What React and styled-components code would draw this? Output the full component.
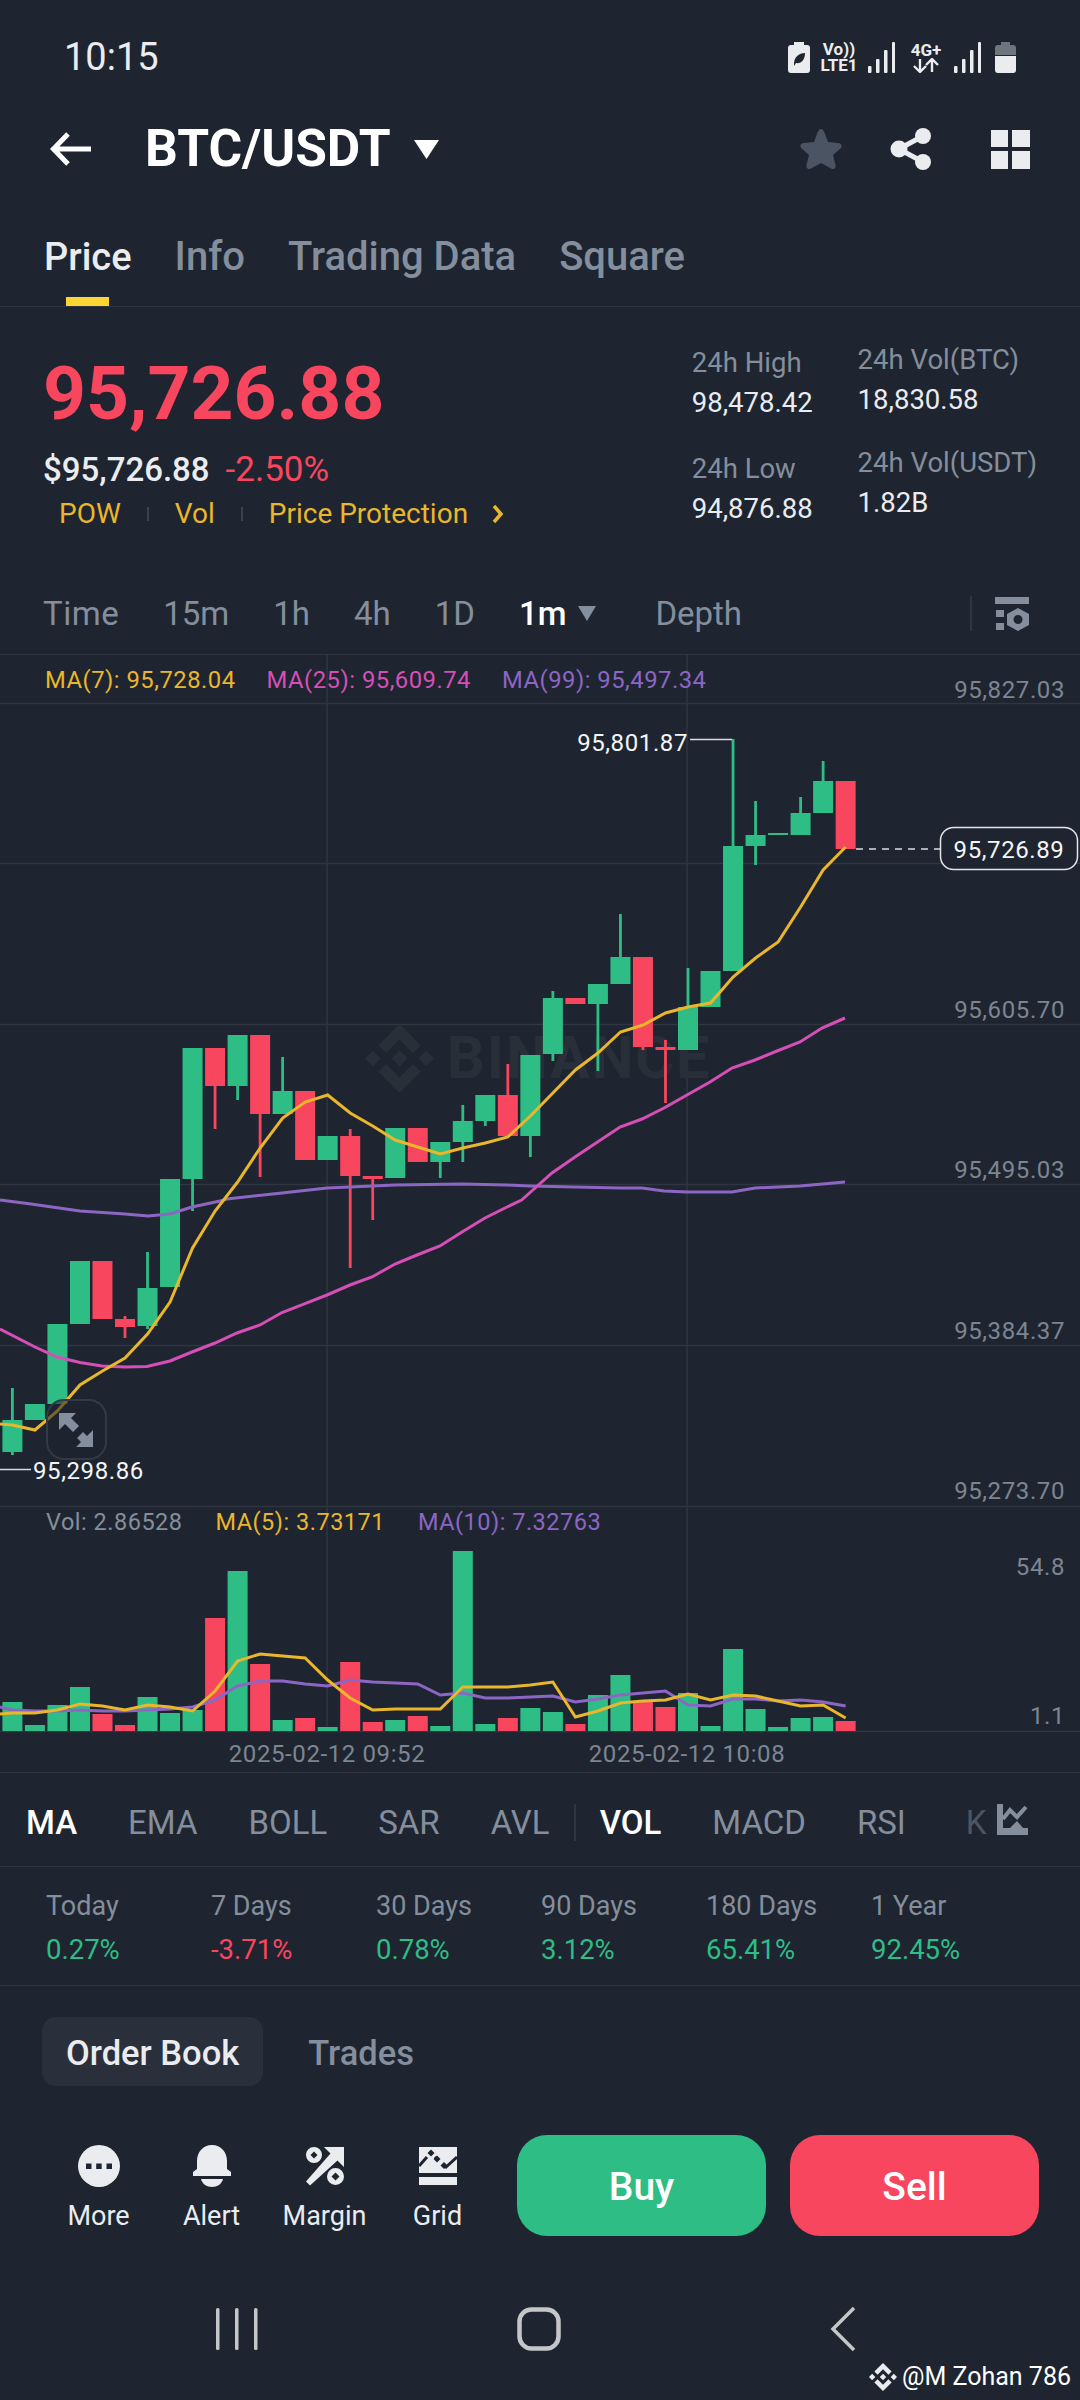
import React from "react";
import styled, { createGlobalStyle } from "styled-components";

const BG = "#1e2530";
const LINE = "#2f3641";
const GRAY = "#848e9c";
const WHITE = "#eaecef";
const GREEN = "#2ebd85";
const RED = "#f8465f";
const YELLOW = "#e9b62c";
const PINK = "#d64fb6";
const PURPLE = "#8d66c4";
const FONT = `Roboto, "Noto Sans", "Liberation Sans", sans-serif`;

const Global = createGlobalStyle`
  html, body { margin: 0; padding: 0; background: ${BG}; }
  * { box-sizing: border-box; }
`;

const Page = styled.div`
  position: relative;
  width: 1080px;
  height: 2400px;
  overflow: hidden;
  display: flex;
  flex-direction: column;
  background: ${BG};
  color: ${WHITE};
  font-family: ${FONT};
`;

const StatusBar = styled.div`
  height: 114px;
  display: flex;
  align-items: center;
  justify-content: space-between;
  padding: 0 64px 0 64px;
`;
const Clock = styled.div`
  font-size: 38px;
  line-height: 44px;
`;
const StatusIcons = styled.div`
  display: flex;
  align-items: center;
  gap: 10px;
`;
const NetStack = styled.div`
  display: flex;
  flex-direction: column;
  align-items: center;
  width: ${(p) => p.$w}px;
  margin-left: ${(p) => p.$ml || 0}px;
  font-size: 17px;
  line-height: 16px;
  font-weight: 700;
`;

const Header = styled.div`
  height: 70px;
  display: flex;
  align-items: center;
  padding: 0 50px;
`;
const Pair = styled.div`
  margin-left: 54px;
  font-size: 51.5px;
  line-height: 60px;
  font-weight: 700;
  color: #fff;
`;
const HeaderActions = styled.div`
  margin-left: auto;
  display: flex;
  align-items: center;
  gap: 48px;
`;
const Icon = styled.svg`
  display: block;
  flex: none;
  margin-left: ${(p) => p.$ml || 0}px;
`;

const Tabs = styled.div`
  height: 123px;
  padding: 48px 0 0 44px;
  display: flex;
  gap: 43px;
  border-bottom: 1px solid ${LINE};
`;
const Tab = styled.div`
  display: flex;
  flex-direction: column;
  align-items: center;
  font-size: ${(p) => (p.$on ? 38 : 40)}px;
  line-height: 50px;
  font-weight: 500;
  color: ${(p) => (p.$on ? WHITE : GRAY)};
`;
const Underline = styled.div`
  width: 43px;
  height: 9px;
  margin-top: 15px;
  background: #fcd535;
`;

const PriceSection = styled.div`
  height: 266px;
  display: flex;
  justify-content: space-between;
  padding: 41px 43px 0 43px;
`;
const PriceLeft = styled.div`
  display: flex;
  flex-direction: column;
`;
const BigPrice = styled.div`
  font-size: 75px;
  line-height: 90px;
  font-weight: 700;
  color: ${RED};
`;
const SubPrice = styled.div`
  margin-top: 12px;
  display: flex;
  gap: 16px;
  font-size: 33px;
  line-height: 40px;
  font-weight: 500;
`;
const Change = styled.span`
  color: ${RED};
  font-weight: 400;
  font-size: 35px;
`;
const TagRow = styled.div`
  margin-top: 6px;
  padding-left: 16px;
  display: flex;
  align-items: center;
  font-size: 28px;
  line-height: 36px;
  color: ${YELLOW};
`;
const TagSep = styled.span`
  width: 2px;
  height: 14px;
  margin: 0 26px;
  background: #3a414c;
`;
const StatGrid = styled.div`
  display: flex;
  gap: 45px;
`;
const StatCol = styled.div`
  display: flex;
  flex-direction: column;
  gap: ${(p) => p.$gap}px;
  margin-top: ${(p) => p.$top}px;
`;
const Stat = styled.div`
  display: flex;
  flex-direction: column;
  gap: 4px;
  font-size: 27.5px;
  line-height: 36px;
`;
const StatLabel = styled.span`
  color: ${GRAY};
`;

const Frames = styled.div`
  height: 82px;
  display: flex;
  align-items: center;
  gap: 44px;
  padding: 0 51px 0 43px;
  font-size: 33px;
  color: ${GRAY};
  border-bottom: 1px solid ${LINE};
`;
const Frame = styled.span`
  color: ${(p) => (p.$on ? "#fff" : GRAY)};
  font-weight: ${(p) => (p.$on ? 500 : 400)};
  letter-spacing: ${(p) => p.$ls || 0}px;
`;
const FrameSelected = styled.div`
  display: flex;
  align-items: center;
  gap: 12px;
  margin-right: 15px;
`;
const FrameTools = styled.div`
  margin-left: auto;
  display: flex;
  align-items: center;
  gap: 23px;
`;
const VRule = styled.span`
  width: 2px;
  height: ${(p) => p.$h}px;
  margin: ${(p) => p.$m || 0};
  background: ${LINE};
`;

const ChartWrap = styled.div`
  position: relative;
  height: 1118px;
  border-bottom: 1px solid ${LINE};
`;
const ChartSvg = styled.svg`
  display: block;
`;
const Legend = styled.div`
  position: absolute;
  left: ${(p) => p.$left}px;
  top: ${(p) => p.$top}px;
  display: flex;
  gap: ${(p) => p.$gap}px;
  font-size: ${(p) => p.$size}px;
  line-height: 30px;
  letter-spacing: 0.5px;
  white-space: nowrap;
`;
const LegendItem = styled.span`
  color: ${(p) => p.$c};
`;
const AxisLabel = styled.text`
  font-family: ${FONT};
  font-size: 24px;
  letter-spacing: 0.6px;
  fill: #7d8592;
`;
const PriceLabel = styled.text`
  font-family: ${FONT};
  font-size: 24px;
  letter-spacing: 0.6px;
  fill: #f4f5f6;
`;
const MarkText = styled.text`
  font-family: ${FONT};
  font-size: 59px;
  font-weight: 700;
  letter-spacing: 2px;
  fill: #282f39;
`;

const Indicators = styled.div`
  height: 94px;
  display: flex;
  align-items: center;
  gap: 51px;
  padding: 5px 0 0 26px;
  font-size: 33px;
  color: ${GRAY};
  white-space: nowrap;
  overflow: hidden;
  border-bottom: 1px solid ${LINE};
`;
const IndItem = styled.span`
  color: ${(p) => (p.$on ? "#fff" : p.$faded ? "#4d5561" : GRAY)};
  font-weight: ${(p) => (p.$on ? 500 : 400)};
`;
const IndTail = styled.div`
  display: flex;
  align-items: center;
  gap: 10px;
  margin-left: 9px;
`;
const IndIcon = styled(Icon)`
  margin-top: -6px;
`;

const Periods = styled.div`
  height: 119px;
  display: flex;
  padding: 21px 0 0 46px;
  border-bottom: 1px solid ${LINE};
`;
const Period = styled.div`
  width: 165px;
  display: flex;
  flex-direction: column;
  gap: 8px;
  font-size: 27px;
  line-height: 36px;
`;
const PeriodValue = styled.span`
  color: ${(p) => (p.$neg ? RED : GREEN)};
  font-size: 27.5px;
`;

const BookTabs = styled.div`
  padding: 31px 0 0 42px;
  display: flex;
  align-items: center;
  gap: 21px;
`;
const BookTab = styled.div`
  height: 69px;
  padding: 2px 24px 0;
  display: flex;
  align-items: center;
  border-radius: 14px;
  background: ${(p) => (p.$on ? "#2a303b" : "transparent")};
  color: ${(p) => (p.$on ? WHITE : GRAY)};
  font-size: 34.5px;
  font-weight: 500;
`;

const Actions = styled.div`
  margin-top: 49px;
  height: 101px;
  display: flex;
  padding-left: 42px;
`;
const Tool = styled.div`
  width: 113px;
  padding-top: 10px;
  display: flex;
  flex-direction: column;
  align-items: center;
  gap: 11px;
  font-size: 27px;
  line-height: 36px;
  color: ${WHITE};
`;
const TradeBtn = styled.div`
  width: 249px;
  height: 101px;
  margin-left: ${(p) => p.$ml}px;
  padding-top: 3px;
  border-radius: 30px;
  display: flex;
  align-items: center;
  justify-content: center;
  background: ${(p) => p.$bg};
  color: #fff;
  font-size: 39px;
  font-weight: 500;
`;

const Nav = styled.div`
  margin-top: 70px;
  height: 46px;
  display: flex;
  align-items: center;
`;

const Watermark = styled.div`
  position: absolute;
  right: 9px;
  bottom: 5px;
  display: flex;
  align-items: center;
  gap: 5px;
  font-size: 25px;
  line-height: 36px;
  color: #fff;
`;

const BinanceLogo = ({ size, color, x, y }) => (
  <svg x={x} y={y} width={size} height={size} viewBox="0 0 126.61 126.61" style={{ display: "block", flex: "none" }}>
    <g fill={color}>
      <path d="m38.73 53.2 24.59-24.58 24.6 24.6 14.3-14.31L63.32 0l-38.9 38.9z" />
      <path d="m0 63.31 14.3-14.31 14.31 14.31-14.31 14.3z" />
      <path d="m38.73 73.41 24.59 24.59 24.6-24.6 14.31 14.29-38.9 38.91-38.91-38.88v-.03z" />
      <path d="m98 63.31 14.3-14.31 14.31 14.3-14.31 14.32z" />
      <path d="M77.83 63.3 63.32 48.78 48.81 63.28l14.51 14.5z" />
    </g>
  </svg>
);

const G = "g";
const R = "r";
// colour, body top, body bottom, wick top, wick bottom (page pixels)
const candles = [
  [G, 1420, 1452, 1388, 1455],
  [G, 1404, 1420],
  [G, 1324, 1404],
  [G, 1261, 1324],
  [R, 1261, 1319],
  [R, 1319, 1327, 1316, 1338],
  [G, 1288, 1326, 1252, 1329],
  [G, 1179, 1287],
  [G, 1048, 1179, 1048, 1211],
  [R, 1048, 1086, 1048, 1129],
  [G, 1035, 1086, 1035, 1100],
  [R, 1035, 1114, 1035, 1177],
  [G, 1091, 1114, 1057, 1114],
  [R, 1091, 1160],
  [G, 1136, 1160],
  [R, 1136, 1176, 1129, 1268],
  [R, 1176, 1179, 1176, 1220],
  [G, 1128, 1178],
  [R, 1128, 1162],
  [G, 1142, 1162, 1142, 1178],
  [G, 1121, 1142, 1105, 1162],
  [G, 1095, 1121, 1095, 1126],
  [R, 1095, 1136, 1064, 1136],
  [G, 1055, 1136, 1055, 1157],
  [G, 998, 1054, 991, 1061],
  [R, 998, 1004],
  [G, 984, 1004, 984, 1071],
  [G, 957, 984, 914, 984],
  [R, 957, 1047, 957, 1050],
  [R, 1047, 1050, 1040, 1103],
  [G, 1007, 1050, 968, 1050],
  [G, 971, 1007],
  [G, 846, 971, 739, 971],
  [G, 835, 846, 801, 865],
  [G, 833, 835],
  [G, 813, 835, 797, 835],
  [G, 781, 813, 761, 813],
  [R, 781, 849],
];

const vols = [1702, 1725, 1705, 1687, 1714, 1725, 1697, 1713, 1710, 1618, 1571, 1664, 1720, 1718, 1727, 1662, 1722, 1720, 1716, 1726, 1551, 1724, 1718, 1708, 1712, 1724, 1695, 1675, 1702, 1707, 1693, 1726, 1649, 1709, 1727, 1718, 1717, 1721];
const ma7 = [1425, 1430, 1411, 1385, 1371, 1358, 1334, 1302, 1248, 1211, 1182, 1148, 1118, 1102, 1095, 1113, 1126, 1140, 1147, 1154, 1148, 1143, 1137, 1116, 1093, 1070, 1053, 1032, 1025, 1013, 1007, 1003, 977, 958, 942, 907, 870, 847];
const vma5 = [1713, 1713, 1710, 1704, 1706, 1710, 1705, 1707, 1711, 1691, 1661, 1654, 1656, 1658, 1680, 1698, 1710, 1709, 1709, 1709, 1687, 1687, 1687, 1685, 1682, 1717, 1711, 1703, 1701, 1700, 1694, 1700, 1695, 1696, 1701, 1706, 1705, 1718];
const vma10 = [1710, 1711, 1711, 1710, 1711, 1711, 1710, 1709, 1707, 1700, 1686, 1681, 1681, 1684, 1686, 1680, 1682, 1683, 1684, 1695, 1693, 1698, 1698, 1697, 1696, 1702, 1699, 1695, 1693, 1691, 1705, 1706, 1699, 1699, 1701, 1700, 1702, 1706];
const ma25 = [[0, 1329], [35, 1347], [57, 1357], [80, 1362.5], [102, 1366], [125, 1367], [147, 1366.4], [170, 1361], [192, 1352], [215, 1343], [237, 1333], [260, 1325], [282, 1312.5], [305, 1303.6], [327, 1295], [350, 1285], [372, 1277], [395, 1264], [417, 1255], [440, 1246], [462, 1232], [485, 1218], [507, 1207], [521.6, 1200], [552, 1173], [575, 1157], [620, 1127], [642, 1119], [664, 1108], [687, 1095], [710, 1082], [732, 1068], [755, 1060], [777, 1051], [800, 1042], [822, 1028], [845, 1018]];
const ma99 = [[0, 1200], [31, 1204], [80, 1211], [125, 1214], [148, 1216], [170, 1214], [192, 1207], [220, 1201], [227, 1199], [282, 1193], [327, 1188], [350, 1187], [395, 1185], [462, 1184], [507, 1185], [530, 1186], [620, 1188], [642, 1188], [664, 1191], [687, 1192], [732, 1192], [755, 1188], [800, 1186], [845, 1182]];

const cx = (i) => 12.4 + 22.52 * i;
const byIndex = (ys, y0) => [[0, y0], ...ys.map((y, i) => [cx(i), y])];
const pts = (a) => a.map(([x, y]) => `${x},${y}`).join(" ");
const col = (c) => (c === G ? GREEN : RED);

const hLines = [703, 863, 1024, 1184, 1345, 1506];
const axis = [[690, "95,827.03"], [1010, "95,605.70"], [1170, "95,495.03"], [1331, "95,384.37"], [1491, "95,273.70"], [1567, "54.8"], [1716, "1.1"]];

const Chart = () => (
  <ChartSvg width="1080" height="1118" viewBox="0 655 1080 1118">
    {hLines.map((y) => (
      <line key={y} x1="0" x2="1080" y1={y + 0.5} y2={y + 0.5} stroke={LINE} strokeWidth="1.5" />
    ))}
    <line x1="0" x2="1080" y1="1731.5" y2="1731.5" stroke={LINE} strokeWidth="1.5" />
    {[327, 687].map((x) => (
      <line key={x} x1={x} x2={x} y1="655" y2="1731" stroke={LINE} strokeWidth="1.5" />
    ))}
    <BinanceLogo x={365} y={1024} size={69} color="#282f39" />
    <MarkText x="447" y="1078">BINANCE</MarkText>

    {candles.map(([c, t, b, wt, wb], i) => (
      <g key={i} fill={col(c)}>
        {wt !== undefined && <rect x={cx(i) - 1.4} y={wt} width="2.8" height={wb - wt} />}
        <rect x={cx(i) - 10} y={t} width="20" height={Math.max(b - t, 2)} />
      </g>
    ))}
    {vols.map((t, i) => (
      <rect key={i} x={cx(i) - 10} y={t} width="20" height={1731 - t} fill={col(candles[i][0])} />
    ))}

    <polyline points={pts(ma99)} fill="none" stroke={PURPLE} strokeWidth="3" />
    <polyline points={pts(ma25)} fill="none" stroke={PINK} strokeWidth="3" />
    <polyline points={pts(byIndex(ma7, 1424))} fill="none" stroke={YELLOW} strokeWidth="3" />
    <polyline points={pts(byIndex(vma10, 1707))} fill="none" stroke={PURPLE} strokeWidth="3" />
    <polyline points={pts(byIndex(vma5, 1714))} fill="none" stroke={YELLOW} strokeWidth="3" />

    {axis.map(([y, t]) => (
      <AxisLabel key={t} x="1065" y={y + 8} textAnchor="end">{t}</AxisLabel>
    ))}
    <AxisLabel x="327" y="1762" textAnchor="middle">2025-02-12 09:52</AxisLabel>
    <AxisLabel x="687" y="1762" textAnchor="middle">2025-02-12 10:08</AxisLabel>

    <PriceLabel x="688" y="751" textAnchor="end">95,801.87</PriceLabel>
    <polyline points="690,739.5 732,739.5" fill="none" stroke="#d9dcdf" strokeWidth="1.5" />
    <PriceLabel x="33" y="1478.5">95,298.86</PriceLabel>
    <line x1="0" x2="31" y1="1469.5" y2="1469.5" stroke="#d9dcdf" strokeWidth="1.5" />

    <line x1="856" x2="940" y1="849" y2="849" stroke="#d9dcdf" strokeWidth="1.5" strokeDasharray="7 6" />
    <rect x="940.5" y="827.5" width="137" height="42" rx="13" fill={BG} stroke="#e3e5e8" strokeWidth="1.5" />
    <PriceLabel x="1009" y="858" textAnchor="middle">95,726.89</PriceLabel>

    <rect x="47" y="1400" width="59" height="59" rx="17" fill={BG} fillOpacity="0.55" stroke="#333a45" strokeWidth="2" />
    <g fill={GRAY}>
      <path d="M59 1413 L76 1413 L71 1418 L79 1426 L73 1432 L65 1424 L59 1430 Z" />
      <path d="M93 1447 L76 1447 L81 1442 L77 1438 L83 1432 L87 1436 L93 1430 Z" />
    </g>
  </ChartSvg>
);

const Star = () => (
  <Icon width="42" height="42" viewBox="0 0 42 42">
    <path d="M21 1 C23 1 24 3 25 6 L28 14 L38 15 C41 15.4 42.5 17 41 20 L33 27 L35.5 37 C36 40.5 34 42 31 40.5 L21 35 L11 40.5 C8 42 6 40.5 6.5 37 L9 27 L1 20 C-0.5 17 1 15.4 4 15 L14 14 L17 6 C18 3 19 1 21 1 Z" fill="#4a5462" />
  </Icon>
);
const Share = () => (
  <Icon width="42" height="42" viewBox="0 0 42 42">
    <path d="M9 21 L33 8 M9 21 L33 34" stroke={WHITE} strokeWidth="5" />
    <circle cx="9" cy="21" r="8.5" fill={WHITE} />
    <circle cx="33" cy="8" r="8" fill={WHITE} />
    <circle cx="33" cy="34" r="8" fill={WHITE} />
  </Icon>
);
const Squares = () => (
  <Icon $ml={11} width="39" height="39" viewBox="0 0 39 39" fill={WHITE}>
    <rect width="17" height="17" />
    <rect x="21" width="18" height="17" />
    <rect y="21" width="17" height="18" />
    <rect x="21" y="21" width="18" height="18" />
  </Icon>
);

const Signal = () => (
  <Icon width="27" height="31" viewBox="0 0 27 31" fill={WHITE}>
    <rect x="0" y="24" width="3.5" height="7" rx="1" />
    <rect x="8" y="17" width="3.5" height="14" rx="1" />
    <rect x="16" y="8" width="3.5" height="23" rx="1" />
    <rect x="24" y="0" width="3" height="31" rx="1" />
  </Icon>
);

const App = () => (
  <Page>
    <Global />
    <StatusBar>
      <Clock>10:15</Clock>
      <StatusIcons>
        <Icon width="22" height="31" viewBox="0 0 22 31">
          <path d="M6 0h10v3h3a3 3 0 0 1 3 3v22a3 3 0 0 1-3 3H3a3 3 0 0 1-3-3V6a3 3 0 0 1 3-3h3z" fill={WHITE} />
          <path d="M6 22c0-7 5-11 11-11 0 7-4 11-9 10l-2 3z" fill={BG} />
        </Icon>
        <NetStack $w={38}>
          <span>Vo))</span>
          <span>LTE1</span>
        </NetStack>
        <Signal />
        <NetStack $w={36} $ml={3}>
          <span>4G+</span>
          <Icon width="30" height="15" viewBox="0 0 30 15" fill="none" stroke={WHITE} strokeWidth="2.4">
            <path d="M9 1v12M3 8l6 6 6-6M21 14V2M15 7l6-6 6 6" />
          </Icon>
        </NetStack>
        <Signal />
        <Icon $ml={4} width="21" height="31" viewBox="0 0 21 31">
          <path d="M6 0h9v3h3a3 3 0 0 1 3 3v7H0V6a3 3 0 0 1 3-3h3z" fill="#6f757e" />
          <path d="M0 14h21v14a3 3 0 0 1-3 3H3a3 3 0 0 1-3-3z" fill={WHITE} />
        </Icon>
      </StatusIcons>
    </StatusBar>

    <Header>
      <Icon width="41" height="34" viewBox="0 0 41 34" fill="none" stroke="#fff" strokeWidth="5">
        <path d="M41 17H4M18 2 3.5 17 18 32" />
      </Icon>
      <Pair>BTC/USDT</Pair>
      <Icon $ml={22} width="27" height="20" viewBox="0 0 27 20">
        <path d="M1 1h25L13.5 20z" fill="#fff" strokeLinejoin="round" />
      </Icon>
      <HeaderActions>
        <Star />
        <Share />
        <Squares />
      </HeaderActions>
    </Header>

    <Tabs>
      <Tab $on>
        Price
        <Underline />
      </Tab>
      <Tab>Info</Tab>
      <Tab>Trading Data</Tab>
      <Tab>Square</Tab>
    </Tabs>

    <PriceSection>
      <PriceLeft>
        <BigPrice>95,726.88</BigPrice>
        <SubPrice>
          <span>$95,726.88</span>
          <Change>-2.50%</Change>
        </SubPrice>
        <TagRow>
          POW
          <TagSep />
          Vol
          <TagSep />
          Price Protection
          <Icon $ml={24} width="12" height="20" viewBox="0 0 12 20" fill="none" stroke={YELLOW} strokeWidth="3.5">
            <path d="M2 2l7 8-7 8" />
          </Icon>
        </TagRow>
      </PriceLeft>
      <StatGrid>
        <StatCol $top={-3} $gap={30}>
          <Stat>
            <StatLabel>24h High</StatLabel>
            98,478.42
          </Stat>
          <Stat>
            <StatLabel>24h Low</StatLabel>
            94,876.88
          </Stat>
        </StatCol>
        <StatCol $top={-6} $gap={27}>
          <Stat>
            <StatLabel>24h Vol(BTC)</StatLabel>
            18,830.58
          </Stat>
          <Stat>
            <StatLabel>24h Vol(USDT)</StatLabel>
            1.82B
          </Stat>
        </StatCol>
      </StatGrid>
    </PriceSection>

    <Frames>
      <Frame $ls={0.5}>Time</Frame>
      <Frame>15m</Frame>
      <Frame>1h</Frame>
      <Frame>4h</Frame>
      <Frame>1D</Frame>
      <FrameSelected>
        <Frame $on>1m</Frame>
        <Icon width="18" height="15" viewBox="0 0 18 15">
          <path d="M0 0h18L9 15z" fill={GRAY} />
        </Icon>
      </FrameSelected>
      <Frame>Depth</Frame>
      <FrameTools>
        <VRule $h={35} />
        <Icon width="34" height="34" viewBox="0 0 34 34" fill={GRAY}>
          <rect x="0" y="0" width="34" height="7" />
          <rect x="1" y="13" width="8" height="7" />
          <rect x="1" y="26" width="8" height="7" />
          <path fillRule="evenodd" d="M23 11l11 6v11l-11 6-11-6V17zM23 18a4.5 4.5 0 1 0 0 9 4.5 4.5 0 0 0 0-9z" />
        </Icon>
      </FrameTools>
    </Frames>

    <ChartWrap>
      <Chart />
      <Legend $left={45} $top={10} $gap={31} $size={23.8}>
        <LegendItem $c={YELLOW}>MA(7): 95,728.04</LegendItem>
        <LegendItem $c={PINK}>MA(25): 95,609.74</LegendItem>
        <LegendItem $c={PURPLE}>MA(99): 95,497.34</LegendItem>
      </Legend>
      <Legend $left={46} $top={852} $gap={33} $size={23.5}>
        <LegendItem $c={GRAY}>Vol: 2.86528</LegendItem>
        <LegendItem $c={YELLOW}>MA(5): 3.73171</LegendItem>
        <LegendItem $c={PURPLE}>MA(10): 7.32763</LegendItem>
      </Legend>
    </ChartWrap>

    <Indicators>
      <IndItem $on>MA</IndItem>
      <IndItem>EMA</IndItem>
      <IndItem>BOLL</IndItem>
      <IndItem>SAR</IndItem>
      <IndItem>AVL</IndItem>
      <VRule $h={37} $m="0 -27px" />
      <IndItem $on>VOL</IndItem>
      <IndItem>MACD</IndItem>
      <IndItem>RSI</IndItem>
      <IndTail>
        <IndItem $faded>K</IndItem>
        <IndIcon width="31" height="31" viewBox="0 0 31 31">
          <path d="M0 0h6v24h25v7H0z" fill={GRAY} />
          <path d="M13 24l7-7 6 7z" fill={GRAY} />
          <path d="M6 15l7-9 7 7 9-10" fill="none" stroke={GRAY} strokeWidth="4" />
        </IndIcon>
      </IndTail>
    </Indicators>

    <Periods>
      {[
        ["Today", "0.27%"],
        ["7 Days", "-3.71%", true],
        ["30 Days", "0.78%"],
        ["90 Days", "3.12%"],
        ["180 Days", "65.41%"],
        ["1 Year", "92.45%"],
      ].map(([l, v, n]) => (
        <Period key={l}>
          <StatLabel>{l}</StatLabel>
          <PeriodValue $neg={n}>{v}</PeriodValue>
        </Period>
      ))}
    </Periods>

    <BookTabs>
      <BookTab $on>Order Book</BookTab>
      <BookTab>Trades</BookTab>
    </BookTabs>

    <Actions>
      <Tool>
        <Icon width="42" height="42" viewBox="0 0 42 42">
          <circle cx="21" cy="21" r="21" fill={WHITE} />
          <g fill={BG}>
            <rect x="8" y="18.5" width="5.5" height="5.5" />
            <rect x="18.2" y="18.5" width="5.5" height="5.5" />
            <rect x="28.5" y="18.5" width="5.5" height="5.5" />
          </g>
        </Icon>
        More
      </Tool>
      <Tool>
        <Icon width="38" height="42" viewBox="0 0 38 42" fill={WHITE}>
          <path d="M19 0c9 0 15 7 15 16v8l4 3v4H0v-4l4-3v-8C4 7 10 0 19 0z" />
          <path d="M8 34h22c-1 5-6 8-11 8S9 39 8 34z" />
        </Icon>
        Alert
      </Tool>
      <Tool>
        <Icon width="38" height="42" viewBox="0 0 38 42" fill={WHITE}>
          <g transform="translate(0 2)">
            <path d="M18 0h20v20l-6.5-6.5L4 38.5 0 34.5 24.5 6.5z" />
            <path fillRule="evenodd" d="M8 0a8 8 0 1 1 0 16A8 8 0 0 1 8 0zM8 4.5 4.5 8 8 11.5 11.5 8zM29.5 21a8.5 8.5 0 1 1 0 17 8.5 8.5 0 0 1 0-17zM29.5 25.5l-4 4 4 4 4-4z" />
          </g>
        </Icon>
        Margin
      </Tool>
      <Tool>
        <Icon width="38" height="42" viewBox="0 0 38 42">
          <g transform="translate(0 2)">
            <rect width="38" height="26" fill={WHITE} />
            <rect y="30" width="38" height="8" fill={WHITE} />
            <path d="M0 19 8 10M16 10l3 3M26 21l12-11" stroke={BG} strokeWidth="3" fill="none" />
            <g fill={BG}>
              <path d="M12 2.5l3.5 3.5L12 9.5 8.5 6z" />
              <path d="M18 8.5l3.5 3.5L18 15.5 14.5 12z" />
              <path d="M25 15l3.5 3.5L25 22l-3.5-3.5z" />
            </g>
          </g>
        </Icon>
        Grid
      </Tool>
      <TradeBtn $bg={GREEN} $ml={23}>Buy</TradeBtn>
      <TradeBtn $bg={RED} $ml={24}>Sell</TradeBtn>
    </Actions>

    <Nav>
      <Icon $ml={216} width="42" height="44" viewBox="0 0 42 44" fill="#c4c6c9">
        <rect x="0" y="1" width="3.5" height="42" rx="1.5" />
        <rect x="19" y="1" width="3.5" height="42" rx="1.5" />
        <rect x="38" y="1" width="3.5" height="42" rx="1.5" />
      </Icon>
      <Icon $ml={259} width="44" height="44" viewBox="0 0 44 44" fill="none" stroke="#c4c6c9" strokeWidth="4.5">
        <rect x="2.5" y="2.5" width="39" height="39" rx="12" />
      </Icon>
      <Icon $ml={269} width="26" height="46" viewBox="0 0 26 46" fill="none" stroke="#c4c6c9" strokeWidth="3.5">
        <path d="M24 2 3 23l21 21" />
      </Icon>
    </Nav>

    <Watermark>
      <BinanceLogo size={28} color="#eaecef" />
      @M Zohan 786
    </Watermark>
  </Page>
);

export default App;
